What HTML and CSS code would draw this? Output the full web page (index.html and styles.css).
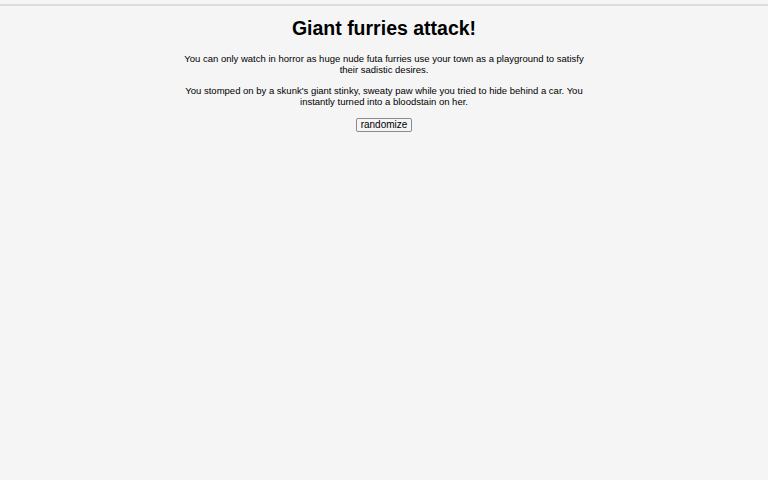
FILE: index.html
```html
<!DOCTYPE html>
<html lang="en">
  <head>
    <meta charset="UTF-8" />
    <meta name="viewport" content="width=device-width, initial-scale=1.0" />
    <title>Giant furries attack!</title>
    <link rel="stylesheet" href="styles.css">
  </head>
  <body>
    <div class="topBar"></div>
    <div class="content">
      <h1>Giant furries attack!</h1>
      <p>You can only watch in horror as huge nude futa furries use your town as a playground to satisfy their sadistic desires.</p>
      <p id="result">You stomped on by a skunk's giant stinky, sweaty paw while you tried to hide behind a car. You instantly turned into a bloodstain on her.</p>
      <button id="randomize">randomize</button>
    </div>
  </body>
</html>
```

FILE: styles.css
```css
body {
  font-family: "Liberation Sans", Arial, sans-serif;
  background-color: #f5f5f5;
  color: #000;
  margin: 0;
  padding: 0;
}

/* thin rule along the top */
.topBar {
  height: 4px;
  border-bottom: 2px solid #dcdcdc;
}

.content {
  width: 404px;
  margin: 0 auto;
  text-align: center;
}

h1 {
  font-size: 19.5px;
  line-height: 22px;
  margin: 11px 0 14px;
}

p {
  font-size: 9.5px;
  line-height: 11px;
  margin: 0 0 10px;
}

#result {
  margin-bottom: 7px;
}

#randomize {
  font-family: "Liberation Sans", Arial, sans-serif;
  font-size: 10px;
  line-height: 12px;
  padding: 0 4px;
  background-color: #f5f5f5;
  border: 1px solid #8a8a8a;
  border-radius: 2px;
}
```
